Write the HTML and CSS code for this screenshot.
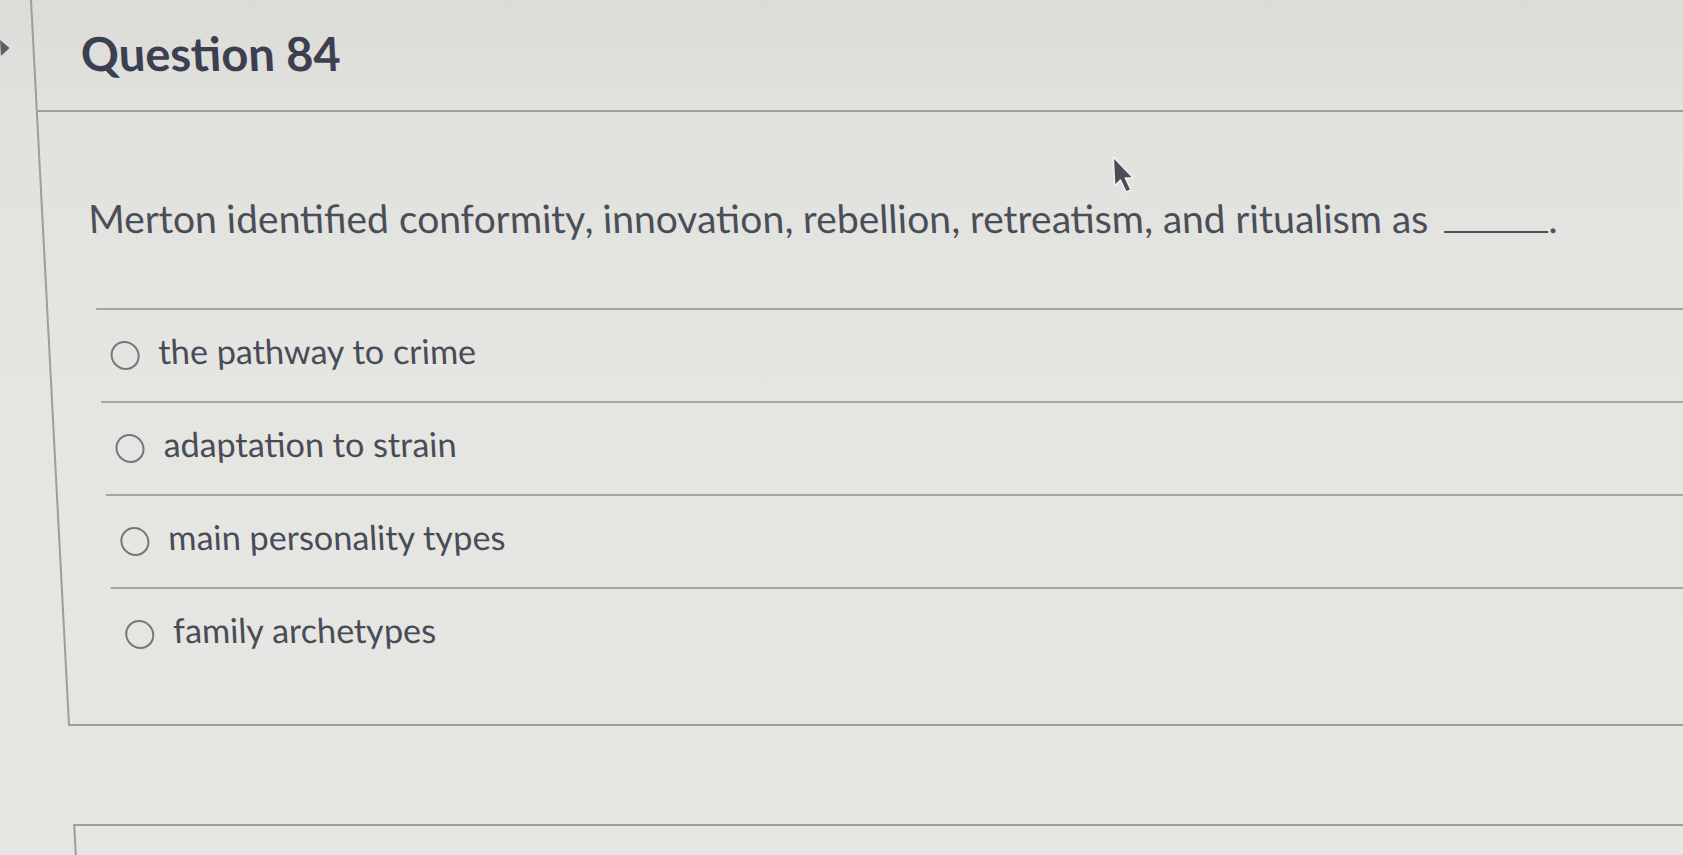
FILE: index.html
```html
<!DOCTYPE html>
<html lang="en">
<head>
<meta charset="utf-8">
<title>Question 84</title>
<link rel="stylesheet" href="styles.css">
</head>
<body>
<div class="screen">
  <span class="edge-arrow"></span>
  <section class="card">
    <header class="card-header">
      <h2 class="card-title">Question 84</h2>
    </header>
    <div class="card-body">
      <p class="question">Merton identified conformity, innovation, rebellion, retreatism, and ritualism as <span class="blank"></span>.</p>
      <ul class="answers">
        <li class="answer"><span class="radio"></span><span class="answer-text">the pathway to crime</span></li>
        <li class="answer"><span class="radio"></span><span class="answer-text">adaptation to strain</span></li>
        <li class="answer"><span class="radio"></span><span class="answer-text">main personality types</span></li>
        <li class="answer"><span class="radio"></span><span class="answer-text">family archetypes</span></li>
      </ul>
    </div>
  </section>
  <section class="card card-next"></section>
  <svg class="cursor" width="22" height="38" viewBox="0 0 22 38" aria-hidden="true">
    <path d="M2 1 L2 30 L8 24 L13 36 L18 34 L13 22 L21 22 Z" fill="#4a4c56" stroke="#f2f2f0" stroke-width="1.5" stroke-linejoin="round"/>
  </svg>
</div>
</body>
</html>
```

FILE: styles.css
```css
html, body {
  margin: 0;
  padding: 0;
  height: 100%;
  overflow: hidden;
}

body {
  background: linear-gradient(180deg, #dbdbd8 0px, #e1e1dd 110px, #e5e5e1 400px, #e6e6e2 855px);
  font-family: Lato, "Open Sans", "Liberation Sans", sans-serif;
  color: #4d515c;
}

.screen {
  position: relative;
  width: 1800px;
  height: 900px;
  transform: skewX(3deg);
  transform-origin: 0 0;
}

.edge-arrow {
  position: absolute;
  left: -2px;
  top: 40px;
  width: 0;
  height: 0;
  border-top: 8px solid transparent;
  border-bottom: 8px solid transparent;
  border-left: 9px solid #5b5e68;
}

.card {
  margin-left: 30px;
  border-left: 2px solid #9c9d9f;
  border-bottom: 2px solid #9c9d9f;
}

.card-header {
  padding: 30px 0 33px 46px;
  border-bottom: 2px solid #9c9d9f;
}

.card-title {
  margin: 0;
  font-size: 47px;
  line-height: 47px;
  font-weight: 700;
  color: #3b3f50;
}

.card-body {
  padding: 83px 0 44px 48px;
}

.question {
  margin: 0 0 66px -3px;
  font-size: 39px;
  line-height: 47px;
  color: #4a4e59;
}

.blank {
  display: inline-block;
  width: 104px;
  border-bottom: 2px solid #4b4f5a;
  margin-left: 6px;
}

.answers {
  list-style: none;
  margin: 0;
  padding: 0;
}

.answer {
  display: flex;
  align-items: center;
  gap: 19px;
  height: 91px;
  padding-left: 12px;
  border-top: 2px solid #a3a4a5;
}

.radio {
  flex: none;
  width: 25px;
  height: 25px;
  border: 2px solid #75777d;
  border-radius: 50%;
}

.answer-text {
  font-size: 34.2px;
  line-height: 38px;
  margin-bottom: 10px;
  color: #484c57;
}

.card-next {
  margin-top: 98px;
  height: 200px;
  border-top: 2px solid #9c9d9f;
  border-bottom: none;
}

.cursor {
  position: absolute;
  left: 1103px;
  top: 156px;
}
```
